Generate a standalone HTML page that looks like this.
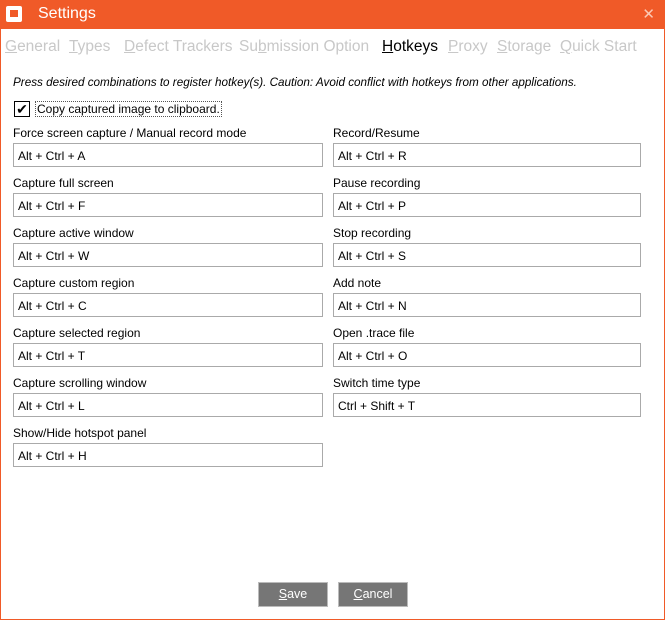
<!DOCTYPE html>
<html><head><style>
*{margin:0;padding:0;box-sizing:border-box}
body{width:665px;height:620px;overflow:hidden;background:#fff;font-family:"Liberation Sans",sans-serif;position:relative}
.frame{position:absolute;left:0;top:0;width:665px;height:620px;border:1px solid #f05a28;border-top:none}
.title{position:absolute;left:0;top:0;width:665px;height:29px;background:#f05a28;color:#fff}
.title .t{position:absolute;left:38px;top:5px;font-size:16px}
.title .x{position:absolute;right:10px;top:5px;font-size:15px;color:#fbc9b5}
.logo{position:absolute;left:6px;top:6px;width:16px;height:16px;background:#fff;border-radius:2px}
.logo:after{content:"";position:absolute;left:4px;top:4px;width:8px;height:7px;background:#f05a28}
.tabs{position:absolute;top:38px;left:5px;font-size:15.5px;color:#c8c8c8;white-space:nowrap}
.tabs span{position:absolute;top:0}
.tabs u{text-decoration:underline}
.note{position:absolute;left:13px;top:76px;font-size:11.7px;font-style:italic;color:#000}
.cb{position:absolute;left:14px;top:101px;width:16px;height:16px;border:1px solid #000;font-size:14px;line-height:14px;text-align:center}
.cbl{position:absolute;left:35px;top:101px;font-size:12px;border:1px dotted #555;padding:0 1px;height:16px;line-height:15px}
.lb{position:absolute;font-size:12px;color:#000}
.in{position:absolute;width:310px;height:24px;border:1px solid #aaa;font-size:12px;padding:5px 4px;color:#000}
.btn{position:absolute;top:582px;width:70px;height:25px;background:#767676;border:1px solid #bbb;color:#fff;font-size:12.5px;text-align:center;line-height:23px}
</style></head><body>
<div class="frame"></div>
<div class="title"><div class="logo"></div><div class="t">Settings</div><div class="x">✕</div></div>
<div class="tabs">
<span style="left:0"><u>G</u>eneral</span>
<span style="left:64px"><u>T</u>ypes</span>
<span style="left:119px"><u>D</u>efect Trackers</span>
<span style="left:234px">Su<u>b</u>mission Option</span>
<span style="left:377px;color:#000"><u>H</u>otkeys</span>
<span style="left:443px"><u>P</u>roxy</span>
<span style="left:492px"><u>S</u>torage</span>
<span style="left:555px"><u>Q</u>uick Start</span>
</div>
<div class="note">Press desired combinations to register hotkey(s). Caution: Avoid conflict with hotkeys from other applications.</div>
<div class="cb">✔</div><div class="cbl">Copy captured image to clipboard.</div>

<div class="lb" style="left:13px;top:126px">Force screen capture / Manual record mode</div><div class="in" style="left:13px;top:143px">Alt + Ctrl + A</div>
<div class="lb" style="left:13px;top:176px">Capture full screen</div><div class="in" style="left:13px;top:193px">Alt + Ctrl + F</div>
<div class="lb" style="left:13px;top:226px">Capture active window</div><div class="in" style="left:13px;top:243px">Alt + Ctrl + W</div>
<div class="lb" style="left:13px;top:276px">Capture custom region</div><div class="in" style="left:13px;top:293px">Alt + Ctrl + C</div>
<div class="lb" style="left:13px;top:326px">Capture selected region</div><div class="in" style="left:13px;top:343px">Alt + Ctrl + T</div>
<div class="lb" style="left:13px;top:376px">Capture scrolling window</div><div class="in" style="left:13px;top:393px">Alt + Ctrl + L</div>
<div class="lb" style="left:13px;top:426px">Show/Hide hotspot panel</div><div class="in" style="left:13px;top:443px">Alt + Ctrl + H</div>

<div class="lb" style="left:333px;top:126px">Record/Resume</div><div class="in" style="left:333px;top:143px;width:308px">Alt + Ctrl + R</div>
<div class="lb" style="left:333px;top:176px">Pause recording</div><div class="in" style="left:333px;top:193px;width:308px">Alt + Ctrl + P</div>
<div class="lb" style="left:333px;top:226px">Stop recording</div><div class="in" style="left:333px;top:243px;width:308px">Alt + Ctrl + S</div>
<div class="lb" style="left:333px;top:276px">Add note</div><div class="in" style="left:333px;top:293px;width:308px">Alt + Ctrl + N</div>
<div class="lb" style="left:333px;top:326px">Open .trace file</div><div class="in" style="left:333px;top:343px;width:308px">Alt + Ctrl + O</div>
<div class="lb" style="left:333px;top:376px">Switch time type</div><div class="in" style="left:333px;top:393px;width:308px">Ctrl + Shift + T</div>

<div class="btn" style="left:258px"><u>S</u>ave</div>
<div class="btn" style="left:338px"><u>C</u>ancel</div>
</body></html>
